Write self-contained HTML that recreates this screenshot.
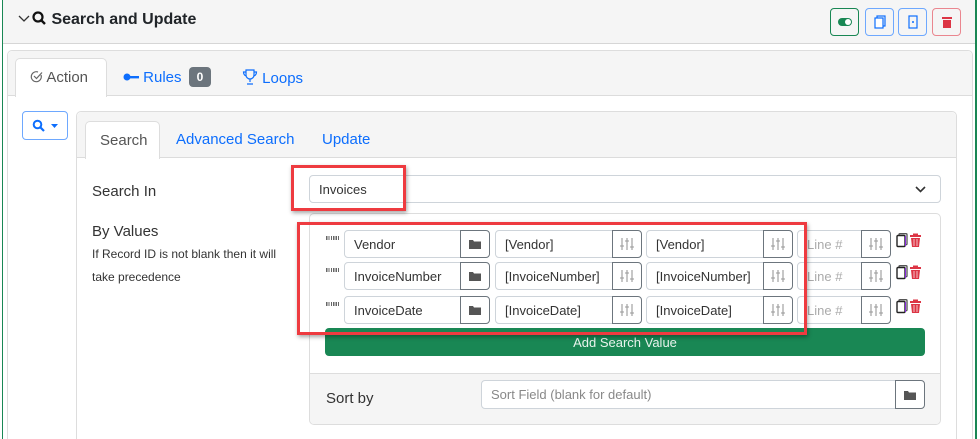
<!DOCTYPE html><html style="width:980px;height:439px;overflow:hidden"><head><style>
*{box-sizing:border-box}
body{margin:0;width:980px;height:439px;overflow:hidden;background:#fff;font-family:"Liberation Sans",sans-serif;color:#212529;position:relative}
.a{position:absolute}
.inp{position:absolute;border:1px solid #ced4da;border-radius:4px;background:#fff;font-size:13px;color:#333;padding-left:9px;display:flex;align-items:center}
.btn{position:absolute;border:1px solid #6c757d;border-radius:0 4px 4px 0;background:#fff;display:flex;align-items:center;justify-content:center}
.tb{position:absolute;top:8px;width:29px;height:28px;border-radius:4px;border:1.5px solid #0d6efd;display:flex;align-items:center;justify-content:center}
.red{position:absolute;border:3px solid #ee3b40;box-shadow:1px 2px 4px rgba(0,0,0,.35)}
</style></head><body>
<div class="a" style="left:2px;top:0;width:975px;height:439px;border-left:1px solid #198754;border-right:2px solid #198754"></div>
<div class="a" style="left:3px;top:0;width:972px;height:44px;background:#f5f5f5;border-bottom:1px solid #d6d6d6"></div>
<div class="a" style="left:17px;top:10px;font-size:16px;font-weight:bold">
<svg width="14" height="14" viewBox="0 0 14 14" style="vertical-align:-1px"><path d="M2 5l5 5 5-5" fill="none" stroke="#333" stroke-width="1.3"/></svg><svg width="16" height="16" viewBox="0 0 16 16" style="vertical-align:-2px"><circle cx="7" cy="7" r="4.5" fill="none" stroke="#111" stroke-width="2.2"/><path d="M10 10l4 4" stroke="#111" stroke-width="2.4"/></svg> Search and Update</div>
<div class="tb" style="left:830px;border-color:#198754"><div style="width:14px;height:8px;border-radius:4px;background:#198754;position:relative"><div style="position:absolute;right:1px;top:1px;width:6px;height:6px;border-radius:3px;background:#fff"></div></div></div>
<div class="tb" style="left:865px;border-color:#6ea8fe"><svg width="12" height="14"><rect x="3" y="1" width="8" height="10" fill="none" stroke="#0d6efd" stroke-width="1.2"/><rect x="1" y="3" width="8" height="10" fill="#fff" stroke="#0d6efd" stroke-width="1.2"/></svg></div>
<div class="tb" style="left:898px;border-color:#6ea8fe"><svg width="10" height="14"><rect x="1" y="1" width="8" height="12" fill="none" stroke="#0d6efd" stroke-width="1.2"/><circle cx="5" cy="7" r="1" fill="#0d6efd"/></svg></div>
<div class="tb" style="left:932px;border-color:#ea868f"><svg width="10" height="12"><rect x="0" y="1" width="10" height="2" fill="#dc3545"/><rect x="1" y="4" width="8" height="8" fill="#dc3545"/></svg></div>

<div class="a" style="left:7px;top:50px;width:966px;height:400px;border:1px solid #ddd;border-radius:5px"></div>
<div class="a" style="left:8px;top:51px;width:964px;height:45px;background:#f5f5f5;border-bottom:1px solid #dcdcdc;border-radius:5px 5px 0 0"></div>
<div class="a" style="left:15px;top:58px;width:92px;height:39px;background:#fff;border:1px solid #ddd;border-bottom:none;border-radius:5px 5px 0 0;font-size:15px;color:#555;padding:10px 0 0 14px">
<svg width="13" height="13" viewBox="0 0 13 13" style="vertical-align:-1px"><path d="M11 5A5 5 0 1 1 8 2" fill="none" stroke="#666" stroke-width="1.2"/><path d="M4 6l2.5 2.5L12 2.5" fill="none" stroke="#666" stroke-width="1.2"/></svg> Action</div>
<div class="a" style="left:123px;top:69px;font-size:15px;color:#0d6efd"><svg width="16" height="8" style="vertical-align:1px"><circle cx="4" cy="4" r="3.5" fill="#0d6efd"/><rect x="6" y="3" width="10" height="2.4" fill="#0d6efd"/></svg> Rules</div>
<div class="a" style="left:189px;top:67px;width:22px;height:20px;background:#6c757d;border-radius:4px;color:#fff;font-size:12px;font-weight:bold;text-align:center;line-height:20px">0</div>
<div class="a" style="left:242px;top:69px;font-size:15px;color:#0d6efd"><svg width="16" height="16" viewBox="0 0 16 16" style="vertical-align:-2px"><path d="M4 1h8v5a4 4 0 0 1-8 0zM4 3H1.5c0 3 2 4 3 4M12 3h2.5c0 3-2 4-3 4M8 10v3M5 15h6" fill="none" stroke="#0d6efd" stroke-width="1.2"/></svg> Loops</div>

<div class="a" style="left:22px;top:111px;width:46px;height:29px;border:1.5px solid #6ea8fe;border-radius:4px;display:flex;align-items:center;justify-content:center;gap:6px"><svg width="13" height="13"><circle cx="5.5" cy="5.5" r="3.8" fill="none" stroke="#0d6efd" stroke-width="2"/><path d="M8.5 8.5l3.5 3.5" stroke="#0d6efd" stroke-width="2.2"/></svg><svg width="7" height="4"><path d="M0 0h7L3.5 4z" fill="#0d6efd"/></svg></div>

<div class="a" style="left:76px;top:111px;width:881px;height:340px;border:1px solid #ddd;border-radius:5px"></div>
<div class="a" style="left:77px;top:112px;width:879px;height:46px;background:#f5f5f5;border-bottom:1px solid #dcdcdc;border-radius:5px 5px 0 0"></div>
<div class="a" style="left:85px;top:121px;width:75px;height:38px;background:#fff;border:1px solid #ddd;border-bottom:none;border-radius:5px 5px 0 0;font-size:15px;color:#555;padding:10px 0 0 14px">Search</div>
<div class="a" style="left:176px;top:131px;font-size:15px;color:#0d6efd">Advanced Search</div>
<div class="a" style="left:322px;top:131px;font-size:15px;color:#0d6efd">Update</div>

<div class="a" style="left:92px;top:183px;font-size:15px;color:#333">Search In</div>
<div class="inp" style="left:309px;top:175px;width:632px;height:28px">Invoices<svg class="a" style="right:14px;top:10px" width="11" height="7"><path d="M1 1l4.5 4.5L10 1" fill="none" stroke="#333" stroke-width="1.6"/></svg></div>
<div class="a" style="left:92px;top:223px;font-size:15px;color:#333">By Values</div>
<div class="a" style="left:92px;top:243px;font-size:12px;color:#333;line-height:23px">If Record ID is not blank then it will<br>take precedence</div>

<div class="a" style="left:309px;top:213px;width:632px;height:212px;border:1px solid #ddd;border-radius:5px;overflow:hidden"><div class="a" style="left:0;top:159px;width:632px;height:53px;background:#f5f5f5;border-top:1px solid #ddd"></div></div>

<div id="rows"></div>
<div class="a" style="left:325px;top:328px;width:600px;height:28px;background:#198754;border-radius:4px;color:#e8f3ec;font-size:13px;text-align:center;line-height:30px">Add Search Value</div>
<div class="a" style="left:326px;top:390px;font-size:15px;color:#333">Sort by</div>
<div class="inp" style="left:481px;top:380px;width:416px;height:29px;border-radius:4px 0 0 4px;color:#888">Sort Field (blank for default)</div>
<div class="btn" style="left:895px;top:380px;width:30px;height:29px;border-radius:0 4px 4px 0"><svg width="12" height="10"><path d="M0 1h4l1 1.5h7V10H0z" fill="#555"/></svg></div>

<div class="red" style="left:291px;top:165px;width:115px;height:46px"></div>
<div class="red" style="left:297px;top:222px;width:510px;height:113px"></div>

<script>
var rows=[["Vendor","[Vendor]",230],["InvoiceNumber","[InvoiceNumber]",262],["InvoiceDate","[InvoiceDate]",296]];
var h="";
var fold='<svg width="12" height="10"><path d="M0 1h4l1 1.5h7V10H0z" fill="#555"/></svg>';
var sl='<svg width="14" height="12" viewBox="0 0 14 12"><path d="M2 0v12M7 0v12M12 0v12M0 8h4M5 3h4M10 9h4" stroke="#999" stroke-width="1.1"/></svg>';
rows.forEach(function(r){var y=r[2];
h+='<div class="a" style="left:326px;top:'+(y+6)+'px;width:13px;height:4px;background:repeating-linear-gradient(90deg,#666 0 1.3px,transparent 1.3px 2.4px)"></div>';
h+='<div class="inp" style="left:344px;top:'+y+'px;width:117px;height:28px;border-radius:4px 0 0 4px">'+r[0]+'</div>';
h+='<div class="btn" style="left:460px;top:'+y+'px;width:30px;height:28px">'+fold+'</div>';
h+='<div class="inp" style="left:495px;top:'+y+'px;width:118px;height:28px;border-radius:4px 0 0 4px">'+r[1]+'</div>';
h+='<div class="btn" style="left:612px;top:'+y+'px;width:30px;height:28px">'+sl+'</div>';
h+='<div class="inp" style="left:646px;top:'+y+'px;width:118px;height:28px;border-radius:4px 0 0 4px">'+r[1]+'</div>';
h+='<div class="btn" style="left:763px;top:'+y+'px;width:30px;height:28px">'+sl+'</div>';
h+='<div class="inp" style="left:797px;top:'+y+'px;width:65px;height:28px;border-radius:4px 0 0 4px;color:#aaa">Line #</div>';
h+='<div class="btn" style="left:861px;top:'+y+'px;width:30px;height:28px">'+sl+'</div>';
h+='<svg class="a" style="left:896px;top:'+(y+3)+'px" width="28" height="15"><rect x="3" y="0.7" width="8" height="11" rx="1" fill="none" stroke="#555" stroke-width="1.3"/><rect x="1" y="2.5" width="8" height="11" rx="1" fill="#fff" stroke="#222" stroke-width="1.4"/><path d="M9.5 3v10" stroke="#8a2be2" stroke-width="1"/><rect x="14" y="2" width="11" height="2" fill="#dc3545"/><rect x="17" y="0.5" width="5" height="2" fill="#dc3545"/><path d="M15 5h9l-1 9h-7z" fill="#dc3545"/><path d="M18 6v7M21 6v7" stroke="#fff" stroke-width=".7"/></svg>';
});
document.getElementById("rows").outerHTML=h;
</script>
</body></html>
